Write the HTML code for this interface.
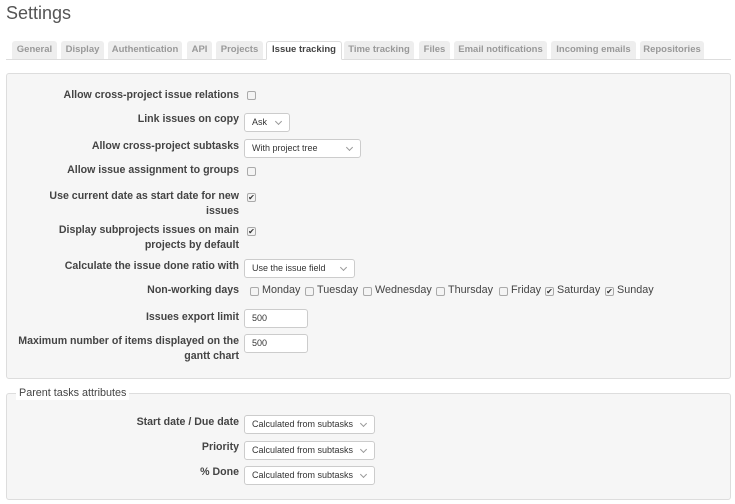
<!DOCTYPE html>
<html><head><meta charset="utf-8"><style>
*{box-sizing:border-box;margin:0;padding:0}
body{width:735px;height:504px;background:#fff;font-family:"Liberation Sans",Arial,sans-serif;color:#484848;position:relative;overflow:hidden;font-size:12px}
.a{position:absolute}
h2{position:absolute;left:6px;top:3px;font-size:18px;font-weight:normal;color:#555}
.tab{position:absolute;top:41px;height:18px;background:#eee;color:#999;font-weight:bold;font-size:9.5px;line-height:18px;text-align:center;border-radius:3px 3px 0 0;white-space:nowrap}
.tab.sel{background:#fff;color:#444;border:1px solid #ddd;border-bottom:1px solid #fff;line-height:16px;height:19px}
.box{position:absolute;left:6px;width:725px;background:#f6f6f6;border:1px solid #ddd;border-radius:3px}
.lb{position:absolute;left:10px;width:229px;text-align:right;font-weight:bold;font-size:10.6px;line-height:15px;color:#444;white-space:nowrap}
.cb{position:absolute;width:9px;height:9px;border:1px solid #aaa;background:#f4f4f4;border-radius:2px;font-size:8px;line-height:7px;text-align:center;color:#333}
.sel2{position:absolute;left:244px;height:19px;background:#fff;border:1px solid #ccc;border-radius:3px;font-size:9px;line-height:17px;padding-left:7px;color:#333;white-space:nowrap}
.sel2:after{content:"";position:absolute;right:8px;top:5px;width:4px;height:4px;border-right:1px solid #999;border-bottom:1px solid #999;transform:rotate(45deg)}
.inp{position:absolute;left:244px;width:64px;height:19px;background:#fff;border:1px solid #ccc;border-radius:3px;font-size:9px;line-height:17px;padding-left:7px;color:#333}
.d{position:absolute;font-size:10.8px;line-height:14px;color:#444;white-space:nowrap}
</style></head><body>
<h2>Settings</h2>
<div class="a" style="left:6px;top:59px;width:725px;height:1px;background:#ddd"></div>
<div class="tab" style="left:12px;width:45px">General</div>
<div class="tab" style="left:61px;width:43px">Display</div>
<div class="tab" style="left:108px;width:74px">Authentication</div>
<div class="tab" style="left:187px;width:25px">API</div>
<div class="tab" style="left:216px;width:47px">Projects</div>
<div class="tab sel" style="left:266px;width:76px">Issue tracking</div>
<div class="tab" style="left:344px;width:70px">Time tracking</div>
<div class="tab" style="left:419px;width:31px">Files</div>
<div class="tab" style="left:454px;width:93px">Email notifications</div>
<div class="tab" style="left:551px;width:85px">Incoming emails</div>
<div class="tab" style="left:640px;width:64px">Repositories</div>

<div class="box" style="top:73px;height:306px"></div>
<div class="lb" style="top:88px">Allow cross-project issue relations</div>
<div class="cb" style="left:247px;top:91px"></div>
<div class="lb" style="top:112px">Link issues on copy</div>
<div class="sel2" style="top:113px;width:46px">Ask</div>
<div class="lb" style="top:139px">Allow cross-project subtasks</div>
<div class="sel2" style="top:139px;width:117px">With project tree</div>
<div class="lb" style="top:163px">Allow issue assignment to groups</div>
<div class="cb" style="left:247px;top:167px"></div>
<div class="lb" style="top:189px">Use current date as start date for new<br>issues</div>
<div class="cb" style="left:247px;top:193px">✔</div>
<div class="lb" style="top:223px">Display subprojects issues on main<br>projects by default</div>
<div class="cb" style="left:247px;top:227px">✔</div>
<div class="lb" style="top:259px">Calculate the issue done ratio with</div>
<div class="sel2" style="top:259px;width:111px">Use the issue field</div>
<div class="lb" style="top:283px">Non-working days</div>
<div class="cb" style="left:250px;top:287px"></div><div class="d" style="left:262px;top:283px">Monday</div>
<div class="cb" style="left:305px;top:287px"></div><div class="d" style="left:317px;top:283px">Tuesday</div>
<div class="cb" style="left:363px;top:287px"></div><div class="d" style="left:375px;top:283px">Wednesday</div>
<div class="cb" style="left:436px;top:287px"></div><div class="d" style="left:448px;top:283px">Thursday</div>
<div class="cb" style="left:499px;top:287px"></div><div class="d" style="left:511px;top:283px">Friday</div>
<div class="cb" style="left:545px;top:287px">✔</div><div class="d" style="left:557px;top:283px">Saturday</div>
<div class="cb" style="left:605px;top:287px">✔</div><div class="d" style="left:617px;top:283px">Sunday</div>
<div class="lb" style="top:310px">Issues export limit</div>
<div class="inp" style="top:309px">500</div>
<div class="lb" style="top:334px">Maximum number of items displayed on the<br>gantt chart</div>
<div class="inp" style="top:334px">500</div>

<div class="box" style="top:393px;height:107px"></div>
<div class="a" style="left:16px;top:386px;padding:0 3px;background:#fff;font-size:10.8px;line-height:14px;color:#444">Parent tasks attributes</div>
<div class="lb" style="top:415px">Start date / Due date</div>
<div class="sel2" style="top:415px;width:131px">Calculated from subtasks</div>
<div class="lb" style="top:440px">Priority</div>
<div class="sel2" style="top:441px;width:131px">Calculated from subtasks</div>
<div class="lb" style="top:465px">% Done</div>
<div class="sel2" style="top:466px;width:131px">Calculated from subtasks</div>
</body></html>
